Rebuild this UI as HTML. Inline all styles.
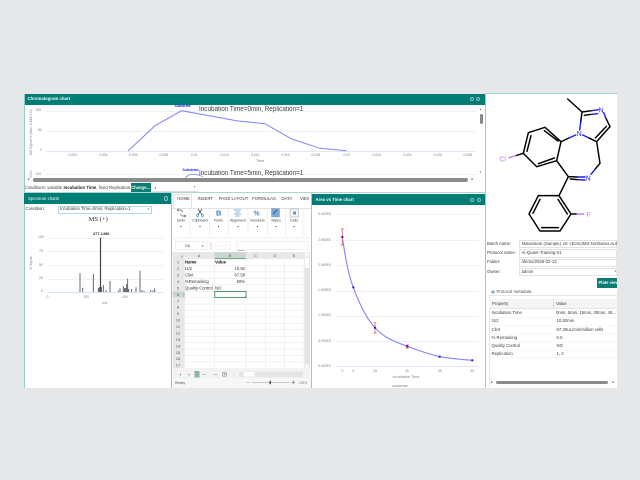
<!DOCTYPE html>
<html><head><meta charset="utf-8"><style>
html,body{margin:0;padding:0;width:640px;height:480px;overflow:hidden;background:#e6e7e9}
#r{position:absolute;left:0;top:0;width:640px;height:480px;overflow:hidden;filter:blur(.3px);font-family:"Liberation Sans",sans-serif}
.a{position:absolute;box-sizing:border-box}
.t{position:absolute;white-space:nowrap;line-height:1;font-size:4.3px;color:#3c3c3c}
.x{position:absolute;white-space:nowrap;line-height:1;font-size:3.4px;color:#808080}
.h{position:absolute;background:#007d75;color:#eefaf8;font-size:4.3px;font-weight:bold;box-sizing:border-box;white-space:nowrap}
.g{position:absolute;background:#eff0f3;height:.8px}
.ic{position:absolute;width:4px;height:4px;border:.7px solid #8cc4bf;border-radius:50%;box-sizing:border-box}
.in{position:absolute;left:519px;width:98px;height:8.300px;background:#fff;border:.6px solid #e2e2e2;box-sizing:border-box}
svg{position:absolute;overflow:visible}
</style></head><body><div id="r">

<div class="a" style="left:24px;top:93.500px;width:593px;height:294.500px;background:#fff"></div>

<!-- CHROMATOGRAM -->
<div class="h" style="left:24px;top:94px;width:460.500px;height:10.500px;line-height:10.500px;padding-left:3.500px">Chromatogram chart</div>
<div class="ic" style="left:469.700px;top:97.200px"></div><div class="ic" style="left:476.300px;top:97.200px"></div>
<div class="g" style="left:46px;top:110.500px;width:430px"></div>
<div class="g" style="left:46px;top:130.500px;width:430px"></div>
<div class="g" style="left:46px;top:150.500px;width:430px;background:#e4e6f6"></div>
<div class="g" style="left:46px;top:174px;width:430px"></div>
<div class="x" style="left:29.500px;top:155px;transform:rotate(-90deg);transform-origin:0 0">MS Signal % (Max: 4,444,000)</div>
<div class="x" style="left:29.500px;top:178px;transform:rotate(-90deg);transform-origin:0 0">0000</div>
<div class="x" style="left:35.500px;top:109.300px">100</div>
<div class="x" style="left:38px;top:129.300px">50</div>
<div class="x" style="left:40px;top:149px">0</div>
<div class="x" style="left:35.500px;top:173.300px">100</div>
<div class="x" style="left:68.500px;top:154px">0.002</div>
<div class="x" style="left:99px;top:154px">0.004</div>
<div class="x" style="left:129px;top:154px">0.006</div>
<div class="x" style="left:159.500px;top:154px">0.008</div>
<div class="x" style="left:191px;top:154px">0.01</div>
<div class="x" style="left:220.500px;top:154px">0.012</div>
<div class="x" style="left:251px;top:154px">0.014</div>
<div class="x" style="left:281px;top:154px">0.016</div>
<div class="x" style="left:311.500px;top:154px">0.018</div>
<div class="x" style="left:343.500px;top:154px">0.02</div>
<div class="x" style="left:372.500px;top:154px">0.022</div>
<div class="x" style="left:403px;top:154px">0.024</div>
<div class="x" style="left:433.500px;top:154px">0.026</div>
<div class="x" style="left:463.500px;top:154px">0.028</div>
<div class="x" style="left:256px;top:160px;font-size:3.800px">Time</div>
<div class="t" style="left:199px;top:106.500px;font-size:6.900px;color:#444;transform:scaleX(.92);transform-origin:0 0">Incubation Time=0min, Replication=1</div>
<div class="t" style="left:199px;top:170.500px;font-size:6.900px;color:#444;transform:scaleX(.92);transform-origin:0 0">Incubation Time=5min, Replication=1</div>
<div class="t" style="left:174.500px;top:105.300px;font-size:3.500px;font-weight:bold;color:#22e">Substrate</div>
<div class="t" style="left:182.500px;top:169.300px;font-size:3.500px;font-weight:bold;color:#22e">Substrate</div>
<svg style="left:0;top:0" width="640" height="480" viewBox="0 0 640 480">
<polyline points="128,151 155,125.700 181.700,110.700 238,121 265,123.700 291.700,139 320,148.300 346.700,150.700" fill="none" stroke="#8284f8" stroke-width="1"/>
<polyline points="185,177.500 190,174.500 196,174.500 203,176.500" fill="none" stroke="#8284f8" stroke-width=".8"/>
</svg>
<div class="a" style="left:33px;top:178.300px;width:435px;height:3.500px;background:#8c8c8c;border-radius:2px"></div>
<div class="x" style="left:27.500px;top:178.300px;color:#333">◂</div>
<div class="x" style="left:471.500px;top:178.300px;color:#333">▸</div>
<div class="a" style="left:479.700px;top:114px;width:3px;height:10px;background:#888;border-radius:1.500px"></div>
<div class="x" style="left:479.700px;top:107.500px;color:#555;font-size:3px">▴</div>
<div class="x" style="left:479.700px;top:170.500px;color:#555;font-size:3px">▾</div>
<div class="t" style="left:24.500px;top:185.500px">Conditions: variable <b style="color:#222">Incubation Time</b>, fixed Replication=1</div>
<div class="a" style="left:130.500px;top:183px;width:20px;height:9.500px;background:#0d7c73;color:#eefaf8;font-size:4.200px;font-weight:bold;line-height:9.500px;text-align:center">Change...</div>
<div class="a" style="left:152px;top:184px;width:46px;height:8px;border-bottom:.6px solid #ddd"></div>
<div class="t" style="left:154px;top:185.800px;font-size:4px">1</div>
<div class="x" style="left:194px;top:186px;font-size:3px;color:#177">▾</div>

<!-- light separators -->
<div class="a" style="left:24px;top:94px;width:1px;height:294px;background:#93cdc7"></div>
<div class="a" style="left:24px;top:192.300px;width:461px;height:1px;background:#a9d6d1"></div>
<div class="a" style="left:484.500px;top:94px;width:1px;height:294px;background:#93cdc7"></div>
<div class="a" style="left:484.500px;top:92.500px;width:132.500px;height:1.300px;background:#9dd0cb"></div>
<div class="a" style="left:171px;top:193px;width:1px;height:195px;background:#93cdc7"></div>
<div class="a" style="left:311px;top:193px;width:1px;height:195px;background:#93cdc7"></div>

<!-- SPECTRUM -->
<div class="h" style="left:24px;top:193px;width:147px;height:11px;line-height:11px;padding-left:4px;font-weight:normal">Spectrum charts</div>
<div class="ic" style="left:163.500px;top:196.300px;width:4.500px;height:4.500px"></div>
<div class="t" style="left:25.500px;top:207.300px">Condition:</div>
<div class="a" style="left:58px;top:205.500px;width:94px;height:8px;border:.7px solid #b5d8e8"></div>
<div class="t" style="left:60px;top:207.300px">Incubation Time=0min, Replication=1</div>
<div class="x" style="left:147.500px;top:208px;font-size:3px;color:#177">▾</div>
<div class="t" style="left:88.500px;top:216.500px;font-size:6.600px;font-family:'Liberation Serif',serif;color:#333">MS (+)</div>
<div class="t" style="left:93px;top:231.500px;font-size:3.900px;font-weight:bold;color:#222">277.1496</div>
<div class="g" style="left:48px;top:237.500px;width:115px"></div>
<div class="g" style="left:48px;top:251.300px;width:115px"></div>
<div class="g" style="left:48px;top:265px;width:115px"></div>
<div class="g" style="left:48px;top:278.700px;width:115px"></div>
<div class="g" style="left:47px;top:292px;width:116px;background:#d6e4f5"></div>
<div class="x" style="left:38px;top:236px">100</div>
<div class="x" style="left:39px;top:249.800px">75</div>
<div class="x" style="left:39px;top:263.500px">50</div>
<div class="x" style="left:39px;top:277.200px">25</div>
<div class="x" style="left:41px;top:290.300px">0</div>
<div class="x" style="left:46.500px;top:295.500px">0</div>
<div class="x" style="left:83.500px;top:295.500px">200</div>
<div class="x" style="left:122px;top:295.500px">400</div>
<div class="x" style="left:102px;top:301.500px">m/z</div>
<div class="x" style="left:30px;top:270px;transform:rotate(-90deg);transform-origin:0 0">% Signal</div>
<svg style="left:0;top:0" width="640" height="480" viewBox="0 0 640 480">
<path fill="none" stroke="#444" stroke-width=".8" d="M80 273.300V292M82.700 287.700V292M93.300 274V292M98.300 288V292M99.300 287V292M101.500 287V292M103.300 285V292M106 290V292M110 281V292M118.300 290.500V292M120 288.300V292M123.300 286V292M124.500 288V292M125.700 288V292M126.700 284V292M127.700 278.700V292M128.700 289V292M131.700 289V292M136 287.300V292M140 270.700V292M142 290V292M144 291V292M150.700 290V292M153 290.500V292M154.700 288.300V292"/>
<path fill="none" stroke="#444" stroke-width="1.200" d="M100.500 237.700V292"/>
</svg>

<!-- SPREADSHEET -->
<div class="a" style="left:172px;top:193px;width:139px;height:195px;background:#fff"></div>
<div class="a" style="left:172.500px;top:194px;width:19.500px;height:14.500px;border:.5px solid #e2e2e2;border-bottom:none"></div>
<div class="a" style="left:172px;top:208px;width:139px;height:.6px;background:#e2e2e2"></div>
<div class="t" style="left:177px;top:197px">HOME</div>
<div class="t" style="left:197.500px;top:197px">INSERT</div>
<div class="t" style="left:218.700px;top:197px">PAGE LAYOUT</div>
<div class="t" style="left:252px;top:197px">FORMULAS</div>
<div class="t" style="left:281.500px;top:197px">DATA</div>
<div class="t" style="left:300px;top:197px">VIEW</div>
<div class="a" style="left:309px;top:194px;width:2px;height:14px;background:#fff"></div>
<svg style="left:0;top:0" width="640" height="480" viewBox="0 0 640 480">
<path stroke="#e6e6e6" stroke-width=".6" fill="none" d="M190 209V236M209.700 209V236M228.700 209V236M248 209V236M267.500 209V236M285.500 209V236M303 209V236M172 238H311"/>
<path d="M177 210h4l2 2M177 210l1.500-1.200M177 210l1.500 1.200M186 216h-4l-2-1.500M186 216l-1.500-1.200M186 216l-1.500 1.200" fill="none" stroke="#666" stroke-width=".7"/>
<path d="M198 209l4 5.500M202 209l-4 5.500" stroke="#444" stroke-width=".8" fill="none"/><circle cx="197.500" cy="215.500" r="1" fill="none" stroke="#3a86c8" stroke-width=".7"/><circle cx="202.500" cy="215.500" r="1" fill="none" stroke="#3a86c8" stroke-width=".7"/>
<text x="216" y="215.500" font-family="Liberation Sans" font-size="7.500" font-weight="bold" fill="#3a7fc4">B</text>
<path d="M234 210h7M235.500 212h4M234 214h7M235.500 216h4" stroke="#5b9bd5" stroke-width=".8" fill="none"/>
<text x="253.500" y="215.500" font-family="Liberation Sans" font-size="7" font-weight="bold" fill="#4a90d0">%</text>
<rect x="271.500" y="208.500" width="8" height="8.500" fill="#7aa9d8" stroke="#999" stroke-width=".5"/><path d="M273 214l4-4" stroke="#246" stroke-width=".7"/>
<rect x="290" y="209" width="8.500" height="8" fill="#f5f5f5" stroke="#999" stroke-width=".5"/><rect x="293" y="211.500" width="3" height="3" fill="#5b9bd5"/>
<g font-family="Liberation Sans" font-size="3.600" fill="#444" text-anchor="middle">
<text x="181" y="221.500">Undo</text><text x="200" y="221.500">Clipboard</text><text x="218.500" y="221.500">Fonts</text><text x="238" y="221.500">Alignment</text><text x="257.500" y="221.500">Numbers</text><text x="276" y="221.500">Styles</text><text x="294" y="221.500">Cells</text>
<g font-size="2.800" fill="#333"><text x="181" y="227.500">▾</text><text x="200" y="227.500">▾</text><text x="218.500" y="227.500">▾</text><text x="238" y="227.500">▾</text><text x="257.500" y="227.500">▾</text><text x="276" y="227.500">▾</text><text x="294" y="227.500">▾</text></g>
<text x="304.500" y="236" font-size="3" fill="#666">ˆ</text>
</g>
<rect x="175.500" y="241.500" width="31.500" height="8" fill="#fff" stroke="#e4e4e4" stroke-width=".6"/>
<rect x="216" y="241.500" width="14" height="8" fill="#fff" stroke="#ececec" stroke-width=".6"/>
<rect x="237" y="241.500" width="71" height="8" fill="#fff" stroke="#e4e4e4" stroke-width=".6"/>
<text x="185" y="247" font-family="Liberation Sans" font-size="4" fill="#555">D6</text>
<text x="202" y="247" font-family="Liberation Sans" font-size="3" fill="#333">▾</text>
<text x="218" y="247" font-family="Liberation Sans" font-size="3.500" fill="#ccc">× ✓ ƒ</text>
<path d="M211 242.500v1.200M211 245v1.200M211 247.500v1.200" stroke="#777" stroke-width=".6"/>
<path d="M237.500 250.500h7" stroke="#aaa" stroke-width=".8"/>
<rect x="172.500" y="252" width="131.500" height="7" fill="#e8e8e8"/>
<rect x="172.500" y="252" width="12" height="116.500" fill="#e8e8e8"/>
<rect x="214.300" y="252" width="31.700" height="7" fill="#ccd6d0"/>
<rect x="214.300" y="258.200" width="31.700" height=".9" fill="#5a9d76"/>
<rect x="172.500" y="291.200" width="12" height="6.400" fill="#ccd6d0"/>
<rect x="183.800" y="291.200" width=".8" height="6.400" fill="#5a9d76"/>
<path d="M180 257.500l3-3v3z" fill="#bbb"/>
<path stroke="#e6e6e6" stroke-width=".5" fill="none" d="M184.500 252V368.500M214.300 252V368.500M246 252V368.500M265.500 252V368.500M284.500 252V368.500M304 252V368.500M172.500 265.400H304M172.500 271.900H304M172.500 278.300H304M172.500 284.700H304M172.500 291.200H304M172.500 297.600H304M172.500 304H304M172.500 310.400H304M172.500 316.900H304M172.500 323.300H304M172.500 329.700H304M172.500 336.200H304M172.500 342.600H304M172.500 349H304M172.500 355.500H304M172.500 361.900H304M172.500 368.300H304"/>
<g font-family="Liberation Sans" font-size="4" fill="#555" text-anchor="middle">
<text x="199" y="257">A</text><text x="230" y="257" fill="#2f6e4a">B</text><text x="255.500" y="257">C</text><text x="275" y="257">D</text><text x="294" y="257">E</text>
<text x="178" y="263.700">1</text><text x="178" y="270.100">2</text><text x="178" y="276.600">3</text><text x="178" y="283">4</text><text x="178" y="289.400">5</text><text x="178" y="295.900" fill="#2f6e4a">6</text><text x="178" y="302.300">7</text><text x="178" y="308.700">8</text><text x="178" y="315.200">9</text><text x="178" y="321.600">10</text><text x="178" y="328">11</text><text x="178" y="334.500">12</text><text x="178" y="340.900">13</text><text x="178" y="347.300">14</text><text x="178" y="353.800">15</text><text x="178" y="360.200">16</text><text x="178" y="366.600">17</text>
</g>
<g font-family="Liberation Sans" font-size="4.200" fill="#333">
<text x="185" y="263.700" font-weight="bold" fill="#111">Name</text><text x="215" y="263.700" font-weight="bold" fill="#111">Value</text>
<text x="185" y="270.100">t1/2</text><text x="245" y="270.100" text-anchor="end">10.82</text>
<text x="185" y="276.600">Clint</text><text x="245" y="276.600" text-anchor="end">67.58</text>
<text x="185" y="283">%Remaining</text><text x="245" y="283" text-anchor="end">50%</text>
<text x="185" y="289.400">Quality Control</text><text x="215" y="289.400">NO</text>
</g>
<rect x="214.700" y="291.500" width="31.300" height="6" fill="#fff" stroke="#4f9a70" stroke-width="1"/>
<rect x="245" y="296.500" width="1.500" height="1.500" fill="#3f8a5f"/>
<rect x="304.500" y="252" width="5.500" height="116.500" fill="#e4e4e4"/>
<rect x="305" y="258" width="4" height="10" fill="#fff"/>
<rect x="305" y="252.500" width="4" height="4" fill="#f7f7f7"/>
<rect x="305" y="364" width="4" height="4" fill="#f7f7f7"/>
<rect x="172.500" y="369" width="138" height="10" fill="#f3f3f3"/>
<g font-family="Liberation Sans" font-size="3" fill="#2a7a5a"><text x="179.500" y="375.500">◂</text><text x="188.500" y="375.500">▸</text></g>
<rect x="194.500" y="371" width="5" height="6.500" fill="#8db79d"/>
<path d="M202 374.300h3.500M213.500 374.300h4" stroke="#8ab" stroke-width=".7"/>
<circle cx="224.500" cy="374.300" r="2.200" fill="none" stroke="#888" stroke-width=".6"/><circle cx="224.500" cy="374.300" r=".9" fill="#888"/>
<path d="M233.500 371.500v5" stroke="#ddd" stroke-width=".5"/>
<rect x="239" y="371.500" width="64" height="5.500" fill="#e4e4e4"/>
<rect x="243.500" y="372" width="11" height="4.500" fill="#fff"/>
<rect x="172.500" y="379.500" width="138" height="8.500" fill="#f6f6f6"/>
<text x="175" y="384" font-family="Liberation Sans" font-size="3.500" fill="#555">Ready</text>
<path d="M246.500 382.500h3M252 382.500h37" stroke="#999" stroke-width=".5"/>
<rect x="269.500" y="380.700" width="1.500" height="3.500" fill="#555"/>
<path d="M291.500 382.500h3.500M293.200 380.700v3.500" stroke="#555" stroke-width=".6"/>
<text x="299" y="384" font-family="Liberation Sans" font-size="3.200" fill="#777">100%</text>
</svg>

<!-- AREA -->
<div class="h" style="left:312px;top:194px;width:172.500px;height:11px;line-height:11px;padding-left:3.500px">Area vs Time chart</div>
<div class="ic" style="left:469.700px;top:197.700px"></div><div class="ic" style="left:476.700px;top:197.700px"></div>
<div class="g" style="left:336px;top:214px;width:142.500px"></div>
<div class="g" style="left:336px;top:240px;width:142.500px"></div>
<div class="g" style="left:336px;top:265px;width:142.500px"></div>
<div class="g" style="left:336px;top:290.500px;width:142.500px"></div>
<div class="g" style="left:336px;top:315.800px;width:142.500px"></div>
<div class="g" style="left:336px;top:341px;width:142.500px"></div>
<div class="g" style="left:336px;top:366.300px;width:142.500px;background:#e4e6f6"></div>
<div class="x" style="left:318px;top:213px">3.000E6</div>
<div class="x" style="left:318px;top:238.500px">2.500E6</div>
<div class="x" style="left:318px;top:263.800px">2.000E6</div>
<div class="x" style="left:318px;top:289px">1.500E6</div>
<div class="x" style="left:318px;top:314.300px">1.000E6</div>
<div class="x" style="left:318px;top:339.500px">5.000E5</div>
<div class="x" style="left:318px;top:364.800px">0.000E0</div>
<div class="x" style="left:341.500px;top:370px">0</div>
<div class="x" style="left:352.500px;top:370px">5</div>
<div class="x" style="left:373.300px;top:370px">15</div>
<div class="x" style="left:405.300px;top:370px">30</div>
<div class="x" style="left:438px;top:370px">45</div>
<div class="x" style="left:470.500px;top:370px">60</div>
<div class="x" style="left:392.500px;top:376px;font-size:3.800px">Incubation Time</div>
<div class="x" style="left:391.500px;top:385px;font-size:3.800px;height:3px;overflow:hidden">Substrate</div>
<svg style="left:0;top:0" width="640" height="480" viewBox="0 0 640 480">
<path d="M342.300 237C345 256 348 274 353.300 287.300C359 303 366 318 375 327.700C383 337 395 342 407.300 346.300C418 350.500 428 354 439.700 356.700C450 358.500 461 359.500 472.300 360.300" fill="none" stroke="#8284f8" stroke-width="1.100"/>
<g stroke="#ee6f6f" stroke-width=".9" fill="none"><path d="M342.300 229V245M340.800 229H343.800M340.800 245H343.800M375 322.700V333M373.500 322.700H376.500M373.500 333H376.500M407.300 345V348M405.800 345H408.800M405.800 348H408.800"/></g>
<g fill="#3a10b0"><rect x="341.300" y="236" width="2" height="2"/><rect x="352.300" y="286.300" width="2" height="2"/><rect x="374" y="326.700" width="2" height="2"/><rect x="406.300" y="345.300" width="2" height="2"/><rect x="438.700" y="355.700" width="2" height="2"/><rect x="471.300" y="359.300" width="2" height="2"/></g>
</svg>

<!-- MOLECULE -->
<svg style="left:485px;top:90px" width="155" height="150" viewBox="0 0 465 450">
<g fill="none" stroke="#000" stroke-width="4.400" stroke-linecap="round">
<path d="M248 27L291 66M291 66L320 62M298 76L320 73M375 110L335 155M364 109L331 144M335 155L310 143M291 66L287 97M335 155L345 220M345 220L330 238M250 260L278 261M256 267L278 269M250 260L215 212M215 212L228 155M228 155L252 144"/>
<path d="M375 110L362 83"/>
<path d="M228 155L180 112M219 153L178 122M180 112L130 128M130 128L115 190M138 137L126 184M115 190L155 230M155 230L215 212M160 221L208 204"/>
<path d="M115 190L92 197"/>
<path d="M250 260L222 317M222 317L160 317M160 317L132 372M165 328L144 370M132 372L165 423M165 423L225 423M170 413L220 413M225 423L258 372M258 372L222 317M247 372L219 328M258 372L276 372"/>
</g>
<g fill="none" stroke="#1a1aff" stroke-width="4.200" stroke-linecap="round">
<path d="M320 62L340 59M320 73L338 71M356 68L362 83M310 143L293 135M287 97L284 120M330 238L318 253M278 261L300 261M278 269L300 270M252 144L272 135"/>
</g>
<g fill="none" stroke="#c67af5" stroke-width="4.200" stroke-linecap="round"><path d="M92 197L72 203M276 372L296 372"/></g>
<g font-family="Liberation Sans" font-size="21">
<text x="341" y="68" fill="#1a1aff">N</text>
<text x="275" y="138" fill="#1a1aff">N</text>
<text x="302" y="272" fill="#1a1aff">N</text>
<text x="43" y="215" fill="#c67af5">Cl</text>
<text x="305" y="381" fill="#c67af5">F</text>
</g>
</svg>

<!-- RIGHT FORM -->
<div class="t" style="left:487px;top:242px">Batch name:</div>
<div class="t" style="left:487px;top:251px">Protocol name:</div>
<div class="t" style="left:487px;top:260px">Folder:</div>
<div class="t" style="left:487px;top:269.500px">Owner:</div>
<div class="in" style="top:240px"></div>
<div class="in" style="top:249.300px"></div>
<div class="in" style="top:258.500px"></div>
<div class="in" style="top:267.800px"></div>
<div class="a" style="left:521.500px;top:242px;width:95.500px;height:5px;overflow:hidden"><span class="t" style="left:0;top:0">Midazolam (Sample), ist -(Echo)MS-NoStarvis Automation</span></div>
<div class="t" style="left:521.500px;top:251px">Ai-Quant-Training-01</div>
<div class="t" style="left:521.500px;top:260px">/demo/2025-02-13</div>
<div class="t" style="left:521.500px;top:269.500px">admin</div>
<div class="x" style="left:614.500px;top:269.800px;color:#177;font-size:3px">▾</div>
<div class="a" style="left:597px;top:278px;width:20px;height:9.500px;background:#0d7c73;color:#eefaf8;font-size:4.200px;font-weight:bold;line-height:9.500px;padding-left:1.500px;overflow:hidden;white-space:nowrap">Plate view</div>
<div class="a" style="left:488.500px;top:295px;width:128.500px;height:92px;border:.6px solid #e6e6e6;border-right:none;border-bottom:none"></div>
<div class="a" style="left:491px;top:290px;width:4.400px;height:4.400px;border-radius:50%;background:#5a9ed6;border:.7px solid #b4d4ee"></div>
<div class="t" style="left:496.500px;top:290.300px;background:#fff;color:#555;padding-right:1px">Protocol metadata</div>
<div class="a" style="left:489px;top:299px;width:128px;height:10px;background:#f5f5f5;border-bottom:.6px solid #e6e6e6"></div>
<div class="a" style="left:553px;top:299px;width:.7px;height:10px;background:#ddd"></div>
<div class="t" style="left:492px;top:301.500px">Property</div>
<div class="t" style="left:556px;top:301.500px">Value</div>
<div class="t" style="left:491.500px;top:310.800px">Incubation Time</div><div class="t" style="left:556px;top:310.800px">0min, 5min, 15min, 30min, 45...</div>
<div class="t" style="left:491.500px;top:319.300px">t1/2</div><div class="t" style="left:556.500px;top:319.300px">10.82min</div>
<div class="t" style="left:491.500px;top:327.500px">Clint</div><div class="t" style="left:556.500px;top:327.500px">67.30uL/min/million cells</div>
<div class="t" style="left:491.500px;top:335.500px">% Remaining</div><div class="t" style="left:556.500px;top:335.500px">0.5</div>
<div class="t" style="left:491.500px;top:344px">Quality Control</div><div class="t" style="left:556.500px;top:344px">NO</div>
<div class="t" style="left:491.500px;top:352px">Replication</div><div class="t" style="left:556.500px;top:352px">1, 2</div>
<svg style="left:0;top:0" width="640" height="480" viewBox="0 0 640 480"><path stroke="#f0f0f0" stroke-width=".6" fill="none" d="M489 317.500H617M489 325.800H617M489 334H617M489 342H617M489 350.500H617M489 358H617"/></svg>
<div class="a" style="left:496px;top:380.500px;width:112px;height:3px;background:#8c8c8c;border-radius:1.500px"></div>
<div class="x" style="left:490.500px;top:380.500px;color:#333">◂</div>
<div class="x" style="left:612.500px;top:380.500px;color:#333">▸</div>

</div></body></html>
